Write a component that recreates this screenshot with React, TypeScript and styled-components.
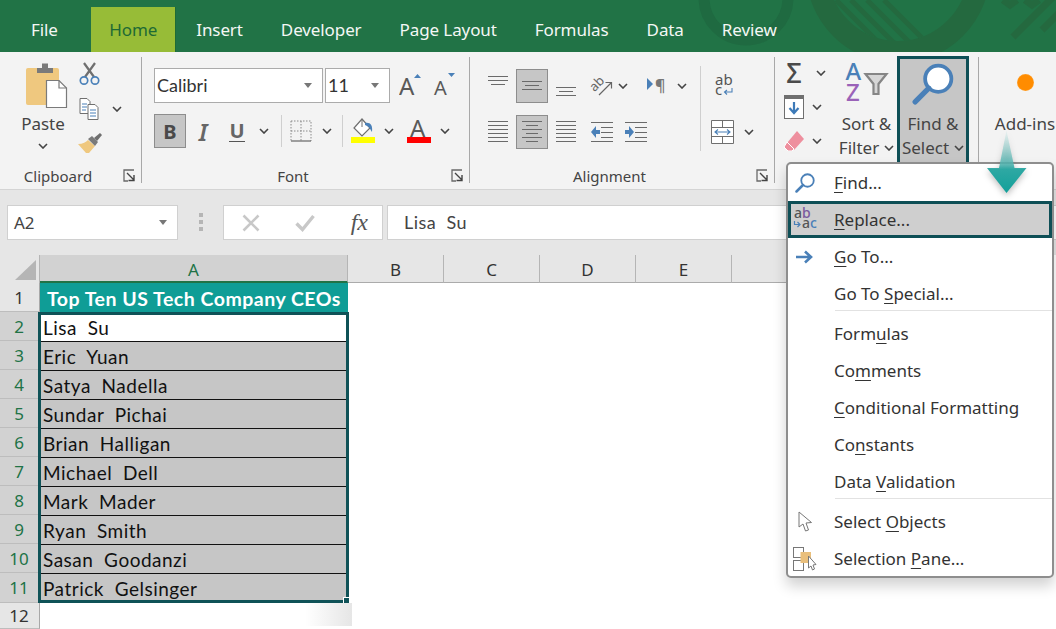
import styled, { createGlobalStyle } from "styled-components";

const GlobalStyle = createGlobalStyle`
  html, body { margin: 0; padding: 0; background: #fff; }
  body { width: 1056px; height: 629px; overflow: hidden; font-family: "Noto Sans", "Open Sans", sans-serif; }
  #root { width: 1056px; height: 629px; }
`;

const Chevron = ({ color = "#444" }: { color?: string }) => (
  <svg width="10" height="6" viewBox="0 0 10 6">
    <polyline points="1,1 5,5 9,1" fill="none" stroke={color} strokeWidth="1.6" />
  </svg>
);

const Launcher = () => (
  <svg width="13" height="13" viewBox="0 0 13 13">
    <path d="M11 1H1v11h4M5 1" fill="none" stroke="#6a6a6a" strokeWidth="1.3" />
    <path d="M4 4l7 7M11 6v5.5H5.5" fill="none" stroke="#444" strokeWidth="1.4" />
  </svg>
);

const PasteIcon = () => (
  <svg width="50" height="50" viewBox="0 0 50 50">
    <rect x="8" y="6" width="33" height="37" rx="2" fill="#efc87f" />
    <path d="M19 11V6h5V1.500h6V6h5v5z" fill="#7a7a7a" />
    <path d="M28.500 18.500H41l7.500 7.500v19.500h-20z" fill="#fff" stroke="#7a7a7a" strokeWidth="1.2" />
    <path d="M41 18.500V26h7.500" fill="none" stroke="#7a7a7a" strokeWidth="1.2" />
  </svg>
);

const ScissorsIcon = () => (
  <svg width="24" height="24" viewBox="0 0 24 24">
    <path d="M6 1l10 14M17 1L7 15" stroke="#6f6f6f" strokeWidth="2.2" fill="none" />
    <circle cx="6" cy="18.500" r="3.700" fill="none" stroke="#4a80b8" strokeWidth="1.700" />
    <circle cx="17" cy="18.500" r="3.700" fill="none" stroke="#4a80b8" strokeWidth="1.700" />
  </svg>
);

const CopyIcon = () => (
  <svg width="24" height="24" viewBox="0 0 24 24">
    <path d="M2 1.500h7l3 3v12H2z" fill="#fff" stroke="#6f6f6f" />
    <path d="M10 7.500h7l3 3v12H10z" fill="#fff" stroke="#6f6f6f" />
    <path d="M4 7h5M4 10h5M4 13h4M12 13h6M12 16h6M12 19h6" stroke="#4a80b8" strokeWidth="1.200" />
  </svg>
);

const BrushIcon = () => (
  <svg width="24" height="24" viewBox="0 0 24 24">
    <path d="M10 8l7 6-6 7H8l-8-9c5 0 8-2 10-4z" fill="#efc87f" />
    <path d="M10 7l4-3 6 6-3 4z" fill="#7a7a7a" />
    <path d="M16 6l6-5 2 2-5 6z" fill="#6f6f6f" />
  </svg>
);

const GrowIcon = ({ up }: { up: boolean }) => (
  <svg width="24" height="28" viewBox="0 0 24 28">
    <text x={up ? 0 : 1} y="24" fontFamily="Noto Sans" fontSize={up ? 24 : 20} fill="#595959">A</text>
    <path d={up ? "M15 7l3.500-4 3.500 4z" : "M15 2h7l-3.500 4z"} fill="#4a80b8" />
  </svg>
);

const BordersIcon = () => (
  <svg width="22" height="22" viewBox="0 0 22 22">
    <path d="M1 1h20v20M1 1v20M11 1v20M1 11h20" fill="none" stroke="#8a8a8a" strokeDasharray="1.500 1.500" />
    <path d="M1 21h20" stroke="#666" strokeWidth="1.200" />
  </svg>
);

const FillIcon = () => (
  <svg width="24" height="26" viewBox="0 0 24 26">
    <path d="M11 1l-8 9 8 8 8-8z" fill="#fff" stroke="#6f6f6f" strokeWidth="1.200" />
    <path d="M11 2v7" stroke="#6f6f6f" />
    <path d="M14 5c5-1 8 2 7 9-2-3-2-5-7-7z" fill="#4a80b8" />
    <rect x="0" y="19" width="24" height="6" fill="#ffff00" />
  </svg>
);

const FontColorIcon = () => (
  <svg width="24" height="26" viewBox="0 0 24 26">
    <text x="3" y="19" fontFamily="Noto Sans" fontSize="24" fill="#595959">A</text>
    <rect x="0" y="19" width="24" height="6" fill="#ff0000" />
  </svg>
);

const AlignLines = ({ rows }: { rows: number[][] }) => (
  <svg width="22" height="24" viewBox="0 0 22 24">
    {rows.map(([y, a, b]) => (
      <line key={y} x1={a} x2={b} y1={y + 0.5} y2={y + 0.5} stroke="#6a6a6a" strokeWidth="1" />
    ))}
  </svg>
);

const OrientIcon = () => (
  <svg width="24" height="22" viewBox="0 0 24 22">
    <text transform="translate(8 9) rotate(-45)" y="4" textAnchor="middle" fontFamily="Noto Sans" fontSize="13" fill="#666">ab</text>
    <path d="M10 20L22 8M16.500 7.500h6v6" fill="none" stroke="#666" strokeWidth="1.200" />
  </svg>
);

const PilcrowIcon = () => (
  <svg width="24" height="18" viewBox="0 0 24 18">
    <path d="M3 1l6 6-6 6z" fill="#4a80b8" />
    <text x="11" y="14" fontFamily="Noto Sans" fontSize="16" fontWeight="600" fill="#777">¶</text>
  </svg>
);

const WrapIcon = () => (
  <svg width="20" height="24" viewBox="0 0 20 24">
    <text x="0" y="11" fontFamily="Noto Sans" fontSize="15" fill="#555">ab</text>
    <text x="0" y="21" fontFamily="Noto Sans" fontSize="15" fill="#555">c</text>
    <path d="M17 14v4H10M12 16l-2.500 2L12 20.500" fill="none" stroke="#4a80b8" strokeWidth="1.100" />
  </svg>
);

const IndentIcon = ({ right }: { right: boolean }) => (
  <svg width="23" height="22" viewBox="0 0 23 22">
    <path d="M1 1.500h22M11 6.500h12M11 11.500h12M11 16.500h12M1 20.500h22" stroke="#6a6a6a" />
    <path d={right ? "M1 9h4V5l5 6-5 6v-4H1z" : "M10 9H6V5l-5 6 5 6v-4h4z"} fill="#4a80b8" />
  </svg>
);

const MergeIcon = () => (
  <svg width="23" height="24" viewBox="0 0 23 24">
    <path d="M.5.500h22v23H.5zM.5 7.500h22M.5 16.500h22M11.500 .500v7M11.500 16.500v7" fill="#fff" stroke="#6f6f6f" />
    <path d="M4 12h15M7 9.500L4 12l3 2.500M16 9.500l3 2.500-3 2.500" fill="none" stroke="#4a80b8" strokeWidth="1.100" />
  </svg>
);

const SumFillIcon = () => (
  <svg width="20" height="24" viewBox="0 0 20 24">
    <rect x=".5" y=".5" width="19" height="23" fill="#fff" stroke="#6f6f6f" />
    <rect x="0" y="0" width="20" height="4" fill="#6f6f6f" />
    <path d="M10 7v11M5.500 13l4.500 5 4.500-5" fill="none" stroke="#3d7ab8" strokeWidth="2.200" />
  </svg>
);

const EraserIcon = () => (
  <svg width="20" height="20" viewBox="0 0 20 20">
    <path d="M13 0l7 8-10 11-7-7z" fill="#ee8f9e" />
    <path d="M3 11l7 7-2 2H4l-4-4z" fill="#ee8f9e" stroke="#fff" strokeWidth="1" />
  </svg>
);

const SortIcon = () => (
  <svg width="44" height="44" viewBox="0 0 44 44">
    <text x="0.500" y="20" fontFamily="Noto Sans" fontWeight="500" fontSize="24" fill="#4a80b8">A</text>
    <text x="1" y="41" fontFamily="Noto Sans" fontWeight="500" fontSize="24" fill="#9a62b8">Z</text>
    <path d="M20.500 14h21l-8 10v10h-5V24z" fill="#d6d6d6" stroke="#858585" strokeWidth="2.200" />
  </svg>
);

const MagnifierIcon = ({ size }: { size: number }) => (
  <svg width={size} height={size} viewBox="0 0 40 40">
    <circle cx="25" cy="15" r="12.500" fill="#fff" stroke="#4a80b8" strokeWidth="3.600" />
    <path d="M16 24L3 37" stroke="#4a80b8" strokeWidth="5" strokeLinecap="round" />
  </svg>
);

const ReplaceIcon = () => (
  <svg width="26" height="28" viewBox="0 0 26 28">
    <text x="2" y="11.500" fontFamily="Noto Sans" fontWeight="500" fontSize="14" fill="#555">a</text>
    <text x="10" y="11.500" fontFamily="Noto Sans" fontWeight="500" fontSize="14" fill="#7a5a9e">b</text>
    <text x="10" y="21.500" fontFamily="Noto Sans" fontWeight="500" fontSize="14" fill="#555">a</text>
    <text x="18" y="21.500" fontFamily="Noto Sans" fontWeight="500" fontSize="14" fill="#4a80b8">c</text>
    <path d="M2.500 15v3.500H8M5.500 16l2.500 2.500L5.500 21" fill="none" stroke="#4a80b8" strokeWidth="1.200" />
  </svg>
);

const GoToIcon = () => (
  <svg width="18" height="14" viewBox="0 0 18 14">
    <path d="M0 7h14M9 1.500L15 7l-6 5.500" fill="none" stroke="#4a80b8" strokeWidth="2.600" />
  </svg>
);

const CursorIcon = ({ w, h }: { w: number; h: number }) => (
  <svg width={w} height={h} viewBox="0 0 15 22">
    <path d="M1 1v15l4-3 2.500 7 3-1-2.500-7 5.500-.5z" fill="#fff" stroke="#777" />
  </svg>
);

const SelectionPaneIcon = () => (
  <svg width="25" height="24" viewBox="0 0 25 24">
    <rect x=".5" y=".5" width="10" height="10" fill="#fff" stroke="#777" />
    <rect x=".5" y="13.500" width="10" height="10" fill="#fff" stroke="#777" />
    <rect x="7.500" y="5" width="10.500" height="11" fill="#e9bf7c" />
    <path d="M15.500 9v12l2.500-2 1.500 4 2-1-1.500-4 3-.5z" fill="#fff" stroke="#777" />
  </svg>
);

const CancelIcon = () => (
  <svg width="18" height="18" viewBox="0 0 18 18">
    <path d="M1.500 1.500l15 15M16.500 1.500l-15 15" fill="none" stroke="#c8c8c8" strokeWidth="2.600" />
  </svg>
);

const EnterIcon = () => (
  <svg width="20" height="18" viewBox="0 0 20 18">
    <path d="M1.500 9.500l6 6L18.500 2" fill="none" stroke="#c8c8c8" strokeWidth="3.400" />
  </svg>
);

const DecorArt = () => (
  <Decor viewBox="0 0 1056 52">
    <defs>
      <clipPath id="innerRing">
        <circle cx="898" cy="-29" r="70" />
      </clipPath>
    </defs>
    <circle cx="746" cy="-2" r="42" fill="none" stroke="#1f6a41" strokeWidth="11" />
    <circle cx="898" cy="-29" r="81" fill="none" stroke="#24693f" strokeWidth="22" />
    <g clipPath="url(#innerRing)" stroke="#24693f" strokeWidth="5">
      <path d="M836 0l50 50M851 0l50 50M867 0l50 50M884 0l50 50" />
    </g>
    <path d="M1013 37l42-42M1042 30l18-18M1003 0l7 5 7-5M1025 0l7 5 7-5" fill="none" stroke="#24693f" strokeWidth="7" />
  </Decor>
);

const TealArrow = () => (
  <Arrow width="48" height="74" viewBox="0 0 48 74">
    <defs>
      <linearGradient id="tealFade" x1="0" y1="0" x2="0" y2="1">
        <stop offset="0" stopColor="#8fd0cd" stopOpacity="0.1" />
        <stop offset="0.55" stopColor="#4fb3af" stopOpacity="0.9" />
        <stop offset="0.62" stopColor="#2ea8a3" />
        <stop offset="1" stopColor="#12a09a" />
      </linearGradient>
    </defs>
    <path d="M23.500 .5l8 37.500h12L23.500 63 4 38h12z" fill="url(#tealFade)" />
  </Arrow>
);

const TABS = ["Insert", "Developer", "Page Layout", "Formulas", "Data", "Review"];

const NAMES = [
  "Lisa  Su",
  "Eric  Yuan",
  "Satya  Nadella",
  "Sundar  Pichai",
  "Brian  Halligan",
  "Michael  Dell",
  "Mark  Mader",
  "Ryan  Smith",
  "Sasan  Goodanzi",
  "Patrick  Gelsinger",
];

const COLUMNS = ["B", "C", "D", "E", ""];

const TOP_LINES = [[2, 1, 21], [6, 1, 21], [10, 4, 18]];
const MID_LINES = [[7, 1, 21], [11, 4, 18], [15, 1, 21]];
const BOTTOM_LINES = [[13, 1, 21], [17, 4, 18], [21, 1, 21]];
const FULL_LEFT = [[1, 1, 21], [5, 1, 21], [9, 1, 21], [13, 1, 21], [17, 1, 21], [21, 1, 21]];
const FULL_MID = [[1, 1, 21], [5, 5, 17], [9, 1, 21], [13, 5, 17], [17, 1, 21], [21, 5, 17]];

const App = () => {
  return (
    <Page>
      <GlobalStyle />
      <TabBar>
        <DecorArt />
        <Tab>File</Tab>
        <HomeTab>Home</HomeTab>
        {TABS.map((name) => (
          <Tab key={name}>{name}</Tab>
        ))}
      </TabBar>

      <Ribbon>
        <Group $width={142}>
          <GroupBody>
            <PasteColumn>
              <PasteIcon />
              <BigLabel>Paste</BigLabel>
              <PasteChevron>
                <Chevron />
              </PasteChevron>
            </PasteColumn>
            <ClipTools>
              <ScissorsIcon />
              <ToolRow>
                <CopyIcon />
                <Chevron />
              </ToolRow>
              <BrushIcon />
            </ClipTools>
          </GroupBody>
          <GroupFooter>
            <GroupLabel>Clipboard</GroupLabel>
            <LauncherSlot>
              <Launcher />
            </LauncherSlot>
          </GroupFooter>
        </Group>

        <Group $width={328}>
          <FontBody>
            <FontRow>
              <SelectBox $width={169}>
                <SelectText>Calibri</SelectText>
                <Caret />
              </SelectBox>
              <SelectBox $width={65}>
                <SelectText>11</SelectText>
                <Caret />
              </SelectBox>
              <Slot $width={24} $ml={7}>
                <GrowIcon up />
              </Slot>
              <Slot $width={24} $ml={10}>
                <GrowIcon up={false} />
              </Slot>
            </FontRow>
            <FontRow>
              <ToggleBox $width={32}>
                <BoldMark>B</BoldMark>
              </ToggleBox>
              <Slot $width={34}>
                <ItalicMark>I</ItalicMark>
              </Slot>
              <Slot $width={34}>
                <UnderlineMark>U</UnderlineMark>
              </Slot>
              <Slot $width={20}>
                <Chevron />
              </Slot>
              <RowSep $ml={7} />
              <Slot $width={22} $ml={8}>
                <BordersIcon />
              </Slot>
              <Slot $width={30}>
                <Chevron />
              </Slot>
              <RowSep />
              <Slot $width={24} $ml={8}>
                <FillIcon />
              </Slot>
              <Slot $width={28}>
                <Chevron />
              </Slot>
              <Slot $width={24} $ml={4}>
                <FontColorIcon />
              </Slot>
              <Slot $width={28}>
                <Chevron />
              </Slot>
            </FontRow>
          </FontBody>
          <GroupFooter>
            <GroupLabel>Font</GroupLabel>
            <LauncherSlot>
              <Launcher />
            </LauncherSlot>
          </GroupFooter>
        </Group>

        <Group $width={305}>
          <AlignBody>
            <AlignLeft>
              <FontRow>
                <Slot $width={36}>
                  <AlignLines rows={TOP_LINES} />
                </Slot>
                <ToggleBox $width={32}>
                  <AlignLines rows={MID_LINES} />
                </ToggleBox>
                <Slot $width={36}>
                  <AlignLines rows={BOTTOM_LINES} />
                </Slot>
                <Slot $width={34}>
                  <OrientIcon />
                </Slot>
                <Slot $width={10}>
                  <Chevron />
                </Slot>
                <Slot $width={24} $ml={16}>
                  <PilcrowIcon />
                </Slot>
                <Slot $width={12} $ml={8}>
                  <Chevron />
                </Slot>
              </FontRow>
              <FontRow>
                <Slot $width={36}>
                  <AlignLines rows={FULL_LEFT} />
                </Slot>
                <ToggleBox $width={32}>
                  <AlignLines rows={FULL_MID} />
                </ToggleBox>
                <Slot $width={36}>
                  <AlignLines rows={FULL_LEFT} />
                </Slot>
                <Slot $width={34}>
                  <IndentIcon right={false} />
                </Slot>
                <Slot $width={34}>
                  <IndentIcon right />
                </Slot>
              </FontRow>
            </AlignLeft>
            <TallSep />
            <AlignRight>
              <FontRow>
                <Slot $width={20} $ml={14}>
                  <WrapIcon />
                </Slot>
              </FontRow>
              <FontRow>
                <Slot $width={23} $ml={10}>
                  <MergeIcon />
                </Slot>
                <Slot $width={12} $ml={9}>
                  <Chevron />
                </Slot>
              </FontRow>
            </AlignRight>
          </AlignBody>
          <GroupFooter>
            <GroupLabel>Alignment</GroupLabel>
            <LauncherSlot>
              <Launcher />
            </LauncherSlot>
          </GroupFooter>
        </Group>

        <Group $width={204}>
          <EditBody>
            <EditTools>
              <EditRow $gap={12}>
                <SigmaMark>Σ</SigmaMark>
                <Chevron />
              </EditRow>
              <EditRow $gap={8}>
                <SumFillIcon />
                <Chevron />
              </EditRow>
              <EditRow $gap={8}>
                <EraserIcon />
                <Chevron />
              </EditRow>
            </EditTools>
            <BigButton $width={57}>
              <BigIconBox $h={56}>
                <SortIcon />
              </BigIconBox>
              <BigLabel>Sort &amp;</BigLabel>
              <BigLabel>
                Filter <Chevron />
              </BigLabel>
            </BigButton>
            <FindButton>
              <BigIconBox $h={53}>
                <MagnifierIcon size={42} />
              </BigIconBox>
              <BigLabel>Find &amp;</BigLabel>
              <BigLabel>
                Select <Chevron />
              </BigLabel>
            </FindButton>
          </EditBody>
        </Group>

        <AddIns>
          <AddInsDot />
          <BigLabel>Add-ins</BigLabel>
        </AddIns>
      </Ribbon>

      <FormulaBar>
        <NameBox>
          <NameText>A2</NameText>
          <Caret />
        </NameBox>
        <GripDots>
          <i />
          <i />
          <i />
        </GripDots>
        <FormulaTools>
          <CancelIcon />
          <EnterIcon />
          <FxMark>fx</FxMark>
        </FormulaTools>
        <FormulaInput>Lisa  Su</FormulaInput>
      </FormulaBar>

      <Sheet>
        <ColumnHeaders>
          <Corner>
            <CornerMark />
          </Corner>
          <ColHead $active>A</ColHead>
          {COLUMNS.map((c) => (
            <ColHead key={c}>{c}</ColHead>
          ))}
        </ColumnHeaders>
        <SheetBody>
          <RowHeaders>
            <RowHead $h={29}>1</RowHead>
            {NAMES.map((_, i) => (
              <RowHead key={i} $h={i === 9 ? 30 : 29} $active>
                {i + 2}
              </RowHead>
            ))}
            <RowHead $h={26}>12</RowHead>
          </RowHeaders>
          <ColumnA>
            <TitleCell>Top Ten US Tech Company CEOs</TitleCell>
            <Selection>
              {NAMES.map((name, i) => (
                <NameCell key={name} $h={i === 0 ? 26 : i === 9 ? 26 : 28} $first={i === 0} $last={i === 9}>
                  {name}
                </NameCell>
              ))}
              <FillHandle />
            </Selection>
            <FadeCell />
          </ColumnA>
        </SheetBody>
      </Sheet>

      <Menu>
        <MenuItem>
          <MenuIcon>
            <MagnifierIcon size={20} />
          </MenuIcon>
          <span>
            <u>F</u>ind...
          </span>
        </MenuItem>
        <MenuItem $active>
          <MenuIcon>
            <ReplaceIcon />
          </MenuIcon>
          <span>
            <u>R</u>eplace...
          </span>
        </MenuItem>
        <MenuItem>
          <MenuIcon>
            <GoToIcon />
          </MenuIcon>
          <span>
            <u>G</u>o To...
          </span>
        </MenuItem>
        <MenuItem>
          <MenuIcon />
          <span>
            Go To <u>S</u>pecial...
          </span>
        </MenuItem>
        <MenuSep />
        <MenuItem>
          <MenuIcon />
          <span>
            Form<u>u</u>las
          </span>
        </MenuItem>
        <MenuItem>
          <MenuIcon />
          <span>
            Co<u>m</u>ments
          </span>
        </MenuItem>
        <MenuItem>
          <MenuIcon />
          <span>
            <u>C</u>onditional Formatting
          </span>
        </MenuItem>
        <MenuItem>
          <MenuIcon />
          <span>
            Co<u>n</u>stants
          </span>
        </MenuItem>
        <MenuItem>
          <MenuIcon />
          <span>
            Data <u>V</u>alidation
          </span>
        </MenuItem>
        <MenuSep />
        <MenuItem>
          <MenuIcon>
            <CursorIcon w={15} h={22} />
          </MenuIcon>
          <span>
            Select <u>O</u>bjects
          </span>
        </MenuItem>
        <MenuItem>
          <MenuIcon>
            <SelectionPaneIcon />
          </MenuIcon>
          <span>
            Selection <u>P</u>ane...
          </span>
        </MenuItem>
      </Menu>
      <TealArrow />
    </Page>
  );
};

export default App;

const Page = styled.div`
  position: relative;
  width: 1056px;
  height: 629px;
  overflow: hidden;
  background: #fff;
  color: #444;
`;

const TabBar = styled.div`
  position: relative;
  display: flex;
  align-items: flex-end;
  height: 52px;
  padding-left: 12px;
  background: #217346;
  box-sizing: border-box;
`;

const Decor = styled.svg`
  position: absolute;
  left: 0;
  top: 0;
  width: 1056px;
  height: 52px;
`;

const Tab = styled.div`
  position: relative;
  display: flex;
  align-items: center;
  height: 45px;
  padding: 0 19px;
  font-size: 17px;
  letter-spacing: -0.100px;
  color: #f4f7f5;
`;

const HomeTab = styled(Tab)`
  margin: 0 1px 0 14.500px;
  padding: 0 18px;
  background: #97bc37;
  color: #1e6a35;
  border-right: 1px solid #1e6a35;
`;

const Ribbon = styled.div`
  display: flex;
  height: 138px;
  background: #f3f3f3;
  border-bottom: 1px solid #d4d4d4;
  box-sizing: border-box;
`;

const Group = styled.div<{ $width: number }>`
  position: relative;
  display: flex;
  flex-direction: column;
  flex: none;
  width: ${(p) => p.$width}px;
  box-sizing: border-box;
  &::after {
    content: "";
    position: absolute;
    right: 0;
    top: 5px;
    bottom: 6px;
    width: 1px;
    background: #a8a8a8;
  }
`;

const GroupBody = styled.div`
  display: flex;
  flex: 1;
  padding: 10px 0 0 18px;
`;

const GroupFooter = styled.div`
  display: flex;
  align-items: center;
  height: 27px;
  flex: none;
`;

const GroupLabel = styled.div`
  flex: 1;
  text-align: center;
  font-size: 15px;
  color: #444;
`;

const LauncherSlot = styled.div`
  display: flex;
  justify-content: center;
  width: 26px;
`;

const PasteColumn = styled.div`
  display: flex;
  flex-direction: column;
  align-items: center;
  width: 50px;
`;

const PasteChevron = styled.div`
  display: flex;
  align-items: center;
  height: 20px;
`;

const BigLabel = styled.div`
  display: flex;
  align-items: center;
  gap: 5px;
  height: 24px;
  font-size: 17px;
  line-height: 24px;
  color: #444;
  white-space: nowrap;
  svg {
    flex: none;
  }
`;

const ClipTools = styled.div`
  display: flex;
  flex-direction: column;
  gap: 11px;
  margin-left: 10px;
`;

const ToolRow = styled.div`
  display: flex;
  align-items: center;
  gap: 10px;
`;

const FontBody = styled.div`
  display: flex;
  flex-direction: column;
  flex: 1;
  gap: 12px;
  padding: 16px 0 0 12px;
`;

const FontRow = styled.div`
  display: flex;
  align-items: center;
  height: 34px;
`;

const SelectBox = styled.div<{ $width: number }>`
  display: flex;
  align-items: center;
  justify-content: space-between;
  width: ${(p) => p.$width}px;
  height: 35px;
  margin-right: 2px;
  padding: 0 10px 0 2px;
  background: #fff;
  border: 1px solid #ababab;
  box-sizing: border-box;
`;

const SelectText = styled.span`
  font-family: "Lato", "Noto Sans", sans-serif;
  font-size: 18px;
  color: #333;
`;

const Caret = styled.span`
  width: 0;
  height: 0;
  border-left: 4px solid transparent;
  border-right: 4px solid transparent;
  border-top: 5px solid #777;
`;

const Slot = styled.div<{ $width: number; $ml?: number }>`
  display: flex;
  align-items: center;
  justify-content: center;
  flex: none;
  width: ${(p) => p.$width}px;
  margin-left: ${(p) => p.$ml ?? 0}px;
`;

const ToggleBox = styled.div<{ $width: number }>`
  display: flex;
  align-items: center;
  justify-content: center;
  flex: none;
  width: ${(p) => p.$width}px;
  height: 34px;
  background: #c6c6c6;
  border: 1px solid #8d8d8d;
  box-sizing: border-box;
`;

const BoldMark = styled.span`
  font-size: 20px;
  font-weight: 700;
  color: #4a4a4a;
`;

const ItalicMark = styled.span`
  font-size: 24px;
  font-style: italic;
  font-weight: 600;
  color: #666;
`;

const UnderlineMark = styled.span`
  font-size: 20px;
  font-weight: 700;
  color: #666;
  border-bottom: 1.500px solid #555;
  line-height: 21px;
`;

const RowSep = styled.div<{ $ml?: number }>`
  width: 1px;
  height: 32px;
  margin-left: ${(p) => p.$ml ?? 0}px;
  background: #cfcfcf;
  flex: none;
`;

const AlignBody = styled.div`
  display: flex;
  flex: 1;
  padding: 17px 0 0 10px;
`;

const AlignLeft = styled.div`
  display: flex;
  flex-direction: column;
  gap: 12px;
  width: 220px;
`;

const TallSep = styled.div`
  width: 1px;
  height: 85px;
  margin-top: -3px;
  background: #cfcfcf;
`;

const AlignRight = styled.div`
  display: flex;
  flex-direction: column;
  gap: 12px;
`;

const EditBody = styled.div`
  display: flex;
  padding: 4px 0 0 9px;
`;

const EditTools = styled.div`
  display: flex;
  flex-direction: column;
  width: 54px;
`;

const EditRow = styled.div<{ $gap: number }>`
  display: flex;
  align-items: center;
  gap: ${(p) => p.$gap}px;
  height: 34px;
`;

const SigmaMark = styled.span`
  width: 20px;
  text-align: center;
  font-size: 27px;
  line-height: 34px;
  font-weight: 500;
  color: #4a4a4a;
`;

const BigButton = styled.div<{ $width: number }>`
  display: flex;
  flex-direction: column;
  align-items: center;
  width: ${(p) => p.$width}px;
`;

const BigIconBox = styled.div<{ $h: number }>`
  display: flex;
  justify-content: center;
  height: ${(p) => p.$h}px;
  padding-top: 4px;
  box-sizing: border-box;
`;

const FindButton = styled.div`
  display: flex;
  flex-direction: column;
  align-items: center;
  width: 72px;
  height: 110px;
  margin-left: 2px;
  background: #c6c6c6;
  border: 3px solid #0e4f56;
  box-sizing: border-box;
`;

const AddIns = styled.div`
  display: flex;
  flex-direction: column;
  align-items: center;
  width: 62px;
  margin-left: 15px;
`;

const AddInsDot = styled.div`
  width: 17px;
  height: 17px;
  margin: 22px 0 21px;
  border-radius: 50%;
  background: radial-gradient(circle, #ff8c00 60%, #ffd9a8 100%);
`;

const FormulaBar = styled.div`
  display: flex;
  align-items: flex-start;
  height: 65px;
  padding: 15px 0 0 7px;
  background: #e6e6e6;
  box-sizing: border-box;
`;

const NameBox = styled.div`
  display: flex;
  align-items: center;
  justify-content: space-between;
  width: 171px;
  height: 35px;
  padding: 0 10px 0 6px;
  background: #fff;
  border: 1px solid #d0d0d0;
  box-sizing: border-box;
`;

const NameText = styled.span`
  font-size: 17px;
  color: #444;
`;

const GripDots = styled.div`
  display: flex;
  flex-direction: column;
  gap: 3px;
  width: 45px;
  align-items: center;
  padding-top: 8px;
  i {
    display: block;
    width: 4px;
    height: 4px;
    background: #b5b5b5;
  }
`;

const FormulaTools = styled.div`
  display: flex;
  align-items: center;
  justify-content: space-between;
  width: 160px;
  height: 35px;
  padding: 0 14px 0 18px;
  background: #fff;
  border: 1px solid #d0d0d0;
  box-sizing: border-box;
`;

const FxMark = styled.span`
  font-family: "Liberation Serif", serif;
  font-style: italic;
  font-size: 24px;
  color: #555;
`;

const FormulaInput = styled.div`
  flex: 1;
  height: 35px;
  margin-left: 4px;
  padding-left: 16px;
  background: #fff;
  border: 1px solid #d0d0d0;
  border-right: none;
  box-sizing: border-box;
  font-family: "Lato", sans-serif;
  font-size: 18px;
  line-height: 33px;
  white-space: pre;
  color: #444;
  letter-spacing: 0.500px;
`;

const Sheet = styled.div`
  background: #fff;
`;

const ColumnHeaders = styled.div`
  display: flex;
  height: 28px;
`;

const Corner = styled.div`
  position: relative;
  width: 39px;
  background: #e6e6e6;
  border-right: 1px solid #b5b5b5;
`;

const CornerMark = styled.div`
  position: absolute;
  right: 3px;
  bottom: 3px;
  width: 0;
  height: 0;
  border-left: 21px solid transparent;
  border-bottom: 20px solid #b5b5b5;
`;

const ColHead = styled.div<{ $active?: boolean }>`
  width: ${(p) => (p.$active ? 308 : 96)}px;
  text-align: center;
  font-size: 17px;
  line-height: 30px;
  box-sizing: border-box;
  flex: none;
  background: ${(p) => (p.$active ? "#d2d2d2" : "#e6e6e6")};
  color: ${(p) => (p.$active ? "#217346" : "#333")};
  border-right: 1px solid #b5b5b5;
  border-bottom: ${(p) => (p.$active ? "2px solid #217346" : "1px solid #ababab")};
`;

const SheetBody = styled.div`
  display: flex;
`;

const RowHeaders = styled.div`
  display: flex;
  flex-direction: column;
  width: 40px;
  flex: none;
`;

const RowHead = styled.div<{ $h: number; $active?: boolean }>`
  height: ${(p) => p.$h}px;
  line-height: ${(p) => p.$h}px;
  text-align: center;
  font-size: 17px;
  box-sizing: border-box;
  padding-right: 1px;
  background: ${(p) => (p.$active ? "#d2d2d2" : "#e6e6e6")};
  color: ${(p) => (p.$active ? "#217346" : "#333")};
  border-right: 1px solid #a8a8a8;
  border-bottom: 1px solid #bdbdbd;
`;

const ColumnA = styled.div`
  width: 312px;
  flex: none;
`;

const TitleCell = styled.div`
  width: 308px;
  height: 29px;
  box-sizing: border-box;
  padding-left: 7px;
  background: #0f9d96;
  color: #fff;
  font-family: "Lato", sans-serif;
  font-weight: 700;
  font-size: 19.500px;
  line-height: 31px;
  white-space: nowrap;
  letter-spacing: 0.500px;
`;

const Selection = styled.div`
  position: relative;
  width: 311px;
  height: 291px;
  margin-left: -2px;
  border: 3px solid #0f5257;
  box-sizing: border-box;
`;

const NameCell = styled.div<{ $h: number; $first: boolean; $last: boolean }>`
  height: ${(p) => p.$h}px;
  padding-left: 2px;
  background: ${(p) => (p.$first ? "#fff" : "#c6c6c6")};
  border-bottom: ${(p) => (p.$last ? "none" : "1px solid #111")};
  font-family: "Lato", sans-serif;
  font-size: 19px;
  line-height: ${(p) => (p.$first ? p.$h : p.$last ? p.$h + 4 : p.$h + 2)}px;
  color: #111;
  white-space: pre;
  letter-spacing: 0.500px;
`;

const FillHandle = styled.div`
  position: absolute;
  right: -3px;
  bottom: -3px;
  width: 6px;
  height: 6px;
  background: #0f5257;
  border-top: 1px solid #fff;
  border-left: 1px solid #fff;
  box-sizing: border-box;
`;

const FadeCell = styled.div`
  width: 312px;
  height: 23px;
  background: linear-gradient(90deg, #fff 85%, #e6e6e6);
`;

const Menu = styled.div`
  position: absolute;
  left: 786px;
  top: 162px;
  width: 268px;
  height: 416px;
  background: #fff;
  border: 2px solid #8e8e8e;
  border-radius: 5px;
  box-sizing: border-box;
  box-shadow: 0 8px 14px rgba(0, 0, 0, 0.18);
`;

const MenuItem = styled.div<{ $active?: boolean }>`
  display: flex;
  align-items: center;
  height: 37px;
  font-size: 17px;
  color: #333;
  background: ${(p) => (p.$active ? "#cfcfcf" : "transparent")};
  box-shadow: ${(p) => (p.$active ? "inset 0 0 0 3px #0e4f56" : "none")};
  u {
    text-underline-offset: 3px;
  }
`;

const MenuIcon = styled.div`
  display: flex;
  align-items: center;
  justify-content: center;
  width: 34px;
  margin-right: 12px;
  flex: none;
`;

const MenuSep = styled.div`
  height: 1px;
  margin: -2px 0 4px 47px;
  background: #e2e2e2;
  position: relative;
`;

const Arrow = styled.svg`
  position: absolute;
  left: 983px;
  top: 130px;
  filter: drop-shadow(0 3px 3px rgba(0, 0, 0, 0.25));
`;
